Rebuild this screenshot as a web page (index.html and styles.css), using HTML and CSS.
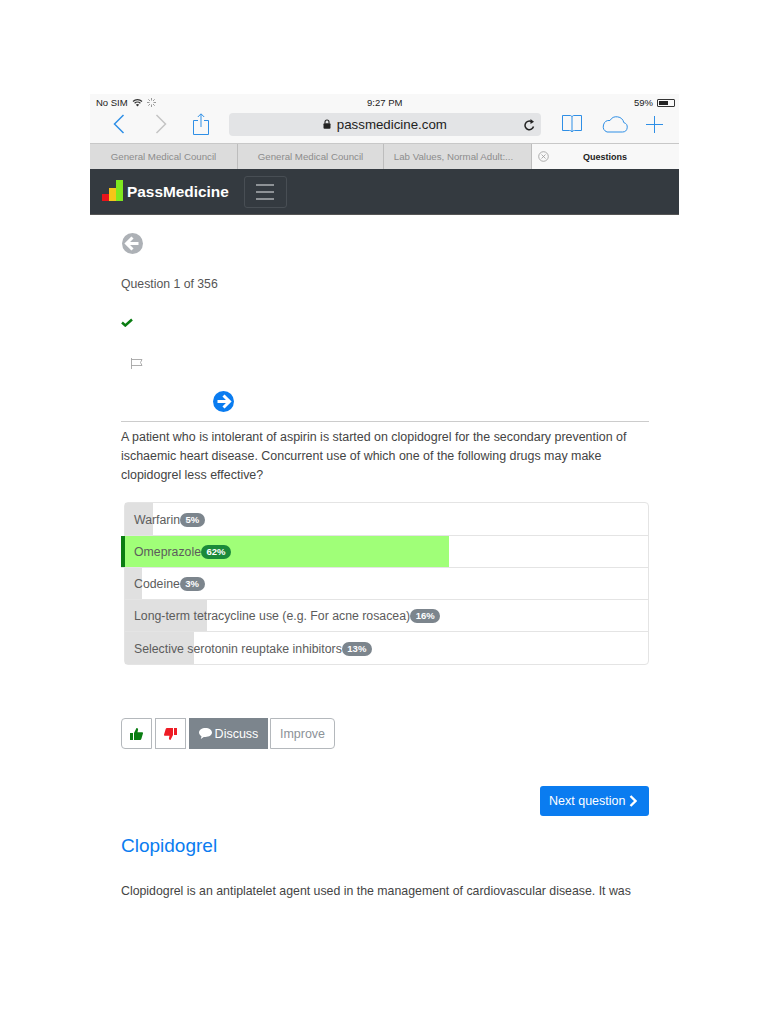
FILE: index.html
```html
<!DOCTYPE html>
<html lang="en">
<head>
    <meta charset="UTF-8">
    <meta name="viewport" content="width=device-width, initial-scale=1.0">
    <title>Questions</title>
    <link rel="stylesheet" href="styles.css">
</head>

<body>
    <div class="screen">
        <div class="statusbar">
            <div class="status-left">
                <span>No SIM</span>
                <svg width="11" height="9" viewBox="0 0 11 9"><path d="M1 3.5a6.5 6.5 0 0 1 9 0M2.6 5.2a4.2 4.2 0 0 1 5.8 0" fill="none" stroke="#333" stroke-width="1.2"/><path d="M5.5 8.5 3.9 6.7a2.3 2.3 0 0 1 3.2 0z" fill="#333"/></svg>
                <svg width="9" height="9" viewBox="0 0 9 9"><path d="M4.5 0v2.5M4.5 6.5V9M0 4.5h2.5M6.5 4.5H9M1.3 1.3 3 3M6 6l1.7 1.7M7.7 1.3 6 3M3 6 1.3 7.7" stroke="#999" stroke-width="1"/></svg>
            </div>
            <span class="status-time">9:27 PM</span>
            <div class="status-right">
                <span>59%</span>
                <span class="battery"><span class="battery-level"></span></span>
            </div>
        </div>

        <div class="toolbar">
            <svg class="tool-back" width="12" height="20" viewBox="0 0 12 20"><path d="M10.5 1 1.5 10l9 9" fill="none" stroke="#2f8fe6" stroke-width="1.5"/></svg>
            <svg class="tool-forward" width="12" height="20" viewBox="0 0 12 20"><path d="M1.5 1l9 9-9 9" fill="none" stroke="#c4c4c4" stroke-width="1.5"/></svg>
            <svg class="tool-share" width="16" height="22" viewBox="0 0 16 22"><path d="M5 7.5H.5v14h15v-14H11M8 14V1M4.8 4 8 .8 11.2 4" fill="none" stroke="#2f8fe6" stroke-width="1"/></svg>
            <div class="urlbar">
                <span class="url">
                    <svg width="8" height="10" viewBox="0 0 8 10"><path d="M2 4.5V3a2 2 0 0 1 4 0v1.5" fill="none" stroke="#222" stroke-width="1.1"/><rect x="0.5" y="4.2" width="7" height="5.5" rx="1" fill="#222"/></svg>
                    passmedicine.com
                </span>
                <svg class="reload" width="11" height="12" viewBox="0 0 11 12"><path d="M9.5 7.5A4.3 4.3 0 1 1 7.2 2.5" fill="none" stroke="#222" stroke-width="1.5"/><path d="M6.5 0l3.5 2.7L6.5 5z" fill="#222"/></svg>
            </div>
            <svg class="tool-book" width="20" height="18" viewBox="0 0 20 18"><path d="M.5.5H8c1 0 2 .5 2 1.5 0-1 1-1.500 2-1.500h7.500v15h-7c-1 0-2 .3-2.500 1.500-.5-1.200-1.500-1.500-2.500-1.500h-7zM10 2v15" fill="none" stroke="#2f8fe6" stroke-width="1"/></svg>
            <svg class="tool-cloud" width="27" height="18" viewBox="0 0 27 18"><path d="M6 17h15.500a4.800 4.800 0 0 0 1.300-9.400A7.500 7.500 0 0 0 9 5.500 6 6 0 0 0 6 17z" fill="none" stroke="#2f8fe6" stroke-width="1"/></svg>
            <svg class="tool-plus" width="17" height="17" viewBox="0 0 17 17"><path d="M8.500 0v17M0 8.500h17" stroke="#2f8fe6" stroke-width="1"/></svg>
        </div>

        <div class="tabs">
            <div class="tab tab-first">General Medical Council</div>
            <div class="tab tab-second">General Medical Council</div>
            <div class="tab tab-third">Lab Values, Normal Adult:...</div>
            <svg class="tab-close" width="11" height="11" viewBox="0 0 11 11"><circle cx="5.5" cy="5.5" r="4.8" fill="none" stroke="#999" stroke-width="0.8"/><path d="M3.5 3.5l4 4M7.5 3.5l-4 4" stroke="#999" stroke-width="0.8"/></svg>
            <div class="tab-active">Questions</div>
        </div>

        <nav class="navbar">
            <svg class="logo" width="21" height="21" viewBox="0 0 21 21">
                <rect x="0" y="14" width="7" height="7" fill="#e8131b"/>
                <rect x="7" y="8" width="7" height="13" fill="#f5c518"/>
                <rect x="14" y="0" width="7" height="21" fill="#7ee81f"/>
            </svg>
            <span class="brand">PassMedicine</span>
            <div class="menu-toggle">
                <span class="menu-line"></span>
                <span class="menu-line"></span>
                <span class="menu-line"></span>
            </div>
        </nav>

        <main class="content">
            <svg class="icon-back" width="21" height="21" viewBox="0 0 21 21">
                <circle cx="10.5" cy="10.5" r="10.5" fill="#adb1b6"/>
                <path d="M10.5 4.500 4.500 10.500l6 6M5 10.500h11.500" fill="none" stroke="#fff" stroke-width="3"/>
            </svg>
            <p class="question-count">Question 1 of 356</p>
            <svg class="icon-check" width="12" height="9" viewBox="0 0 12 9"><path d="M1 4.500 4.300 7.500 11 1.500" fill="none" stroke="#0a7d12" stroke-width="2.5"/></svg>
            <svg class="icon-flag" width="12" height="11" viewBox="0 0 12 11"><path d="M.5 0v11M.5 1.500h10.500L9.500 4.500 11 7.500H.5" fill="none" stroke="#999" stroke-width="0.8"/></svg>
            <svg class="icon-next" width="21" height="21" viewBox="0 0 21 21">
                <circle cx="10.5" cy="10.5" r="10.5" fill="#0a7cf0"/>
                <path d="M10.5 4.500l6 6-6 6M16 10.500H4.500" fill="none" stroke="#fff" stroke-width="3"/>
            </svg>
            <hr class="divider">
            <p class="question-text">A patient who is intolerant of aspirin is started on clopidogrel for the secondary prevention of ischaemic heart disease. Concurrent use of which one of the following drugs may make clopidogrel less effective?</p>

            <ul class="answers">
                <li class="answer">
                    <div class="answer-bar bar-warfarin"></div>
                    <span class="answer-label">Warfarin</span><span class="badge">5%</span>
                </li>
                <li class="answer answer-correct">
                    <div class="answer-bar bar-omeprazole"></div>
                    <span class="answer-label">Omeprazole</span><span class="badge badge-correct">62%</span>
                </li>
                <li class="answer">
                    <div class="answer-bar bar-codeine"></div>
                    <span class="answer-label">Codeine</span><span class="badge">3%</span>
                </li>
                <li class="answer">
                    <div class="answer-bar bar-tetracycline"></div>
                    <span class="answer-label">Long-term tetracycline use (e.g. For acne rosacea)</span><span class="badge">16%</span>
                </li>
                <li class="answer">
                    <div class="answer-bar bar-ssri"></div>
                    <span class="answer-label">Selective serotonin reuptake inhibitors</span><span class="badge">13%</span>
                </li>
            </ul>

            <div class="actions">
                <button class="btn btn-thumb btn-up">
                    <svg width="13" height="12" viewBox="0 0 13 12"><path d="M0 5h3v7H0zM4 5l2.500-5c1.200 0 1.800.8 1.500 2L7.500 4.200H12c1 0 1.200 1 .8 1.800l-1.500 5c-.2.700-.6 1-1.300 1H4z" fill="#0a7d12"/></svg>
                </button>
                <button class="btn btn-thumb btn-down">
                    <svg width="13" height="12" viewBox="0 0 13 12"><path d="M13 7h-3V0h3zM9 7l-2.500 5c-1.200 0-1.800-.8-1.500-2l.5-2.200H1C0 7.800-.2 6.800.2 6l1.500-5C1.900.3 2.300 0 3 0h6z" fill="#ee1c25"/></svg>
                </button>
                <button class="btn btn-discuss">
                    <svg width="13" height="11" viewBox="0 0 13 11"><path d="M6.500 0C2.900 0 0 2 0 4.600c0 1.500 1 2.800 2.500 3.600L1.800 11l3-2.100c.5.100 1.100.1 1.700.1C10.100 9 13 7.100 13 4.600S10.100 0 6.500 0z" fill="#fff"/></svg>
                    Discuss
                </button>
                <button class="btn btn-improve">Improve</button>
            </div>

            <div class="next-row">
                <button class="btn-next">
                    Next question
                    <svg width="8" height="12" viewBox="0 0 8 12"><path d="M1.500 1l5 5-5 5" fill="none" stroke="#fff" stroke-width="2.4"/></svg>
                </button>
            </div>

            <h2 class="topic-title">Clopidogrel</h2>
            <p class="topic-text">Clopidogrel is an antiplatelet agent used in the management of cardiovascular disease. It was</p>
        </main>
    </div>
</body>

</html>
```

FILE: styles.css
```css
* {
    margin: 0;
    padding: 0;
    box-sizing: border-box;
    font-family: 'Liberation Sans', Arial, sans-serif;
}

html, body {
    background: #fff;
    height: 1024px;
    overflow: hidden;
}

body {
    padding: 94px 89px 0 90px;
}

.statusbar {
    display: flex;
    align-items: center;
    justify-content: space-between;
    height: 17px;
    padding: 0 4px 0 6px;
    background: #f8f8f8;
    color: #222;
    font-size: 9.5px;
    position: relative;
}

.status-left, .status-right {
    display: flex;
    align-items: center;
    gap: 4px;
}

.status-time {
    position: absolute;
    left: 277px;
}

.battery {
    display: block;
    width: 18px;
    height: 8px;
    border: 1px solid #333;
    border-radius: 1px;
    padding: 1px;
}

.battery-level {
    display: block;
    width: 9px;
    height: 100%;
    background: #222;
}

.toolbar {
    display: flex;
    align-items: center;
    height: 33px;
    background: #f8f8f8;
    border-bottom: 1px solid #c8c8c8;
    padding: 0 0 6px 23px;
}

.tool-forward {
    margin-left: 30px;
}

.tool-share {
    margin-left: 26px;
}

.urlbar {
    display: flex;
    align-items: center;
    justify-content: center;
    position: relative;
    width: 312px;
    height: 23px;
    margin-left: 20px;
    background: #e3e4e6;
    border-radius: 4px;
    color: #222;
    font-size: 13.3px;
}

.url svg {
    margin-right: 2px;
}

.reload {
    position: absolute;
    right: 6px;
    top: 6px;
}

.tool-book {
    margin-left: 21px;
}

.tool-cloud {
    margin-left: 19px;
}

.tool-plus {
    margin-left: 18px;
}

.tabs {
    display: flex;
    align-items: center;
    height: 25px;
    background: #f8f8f8;
    font-size: 9.7px;
}

.tab {
    display: flex;
    align-items: center;
    justify-content: center;
    height: 100%;
    background: #dcdcdc;
    color: #8c8c8c;
    border-right: 1px solid #bdbdbd;
}

.tab-first {
    width: 148px;
}

.tab-second {
    width: 146px;
}

.tab-third {
    width: 148px;
    padding-right: 8px;
}

.tab-close {
    margin-left: 6px;
}

.tab-active {
    margin-left: 34px;
    color: #222;
    font-size: 9px;
    font-weight: bold;
}

.navbar {
    display: flex;
    align-items: center;
    height: 46px;
    background: #343a40;
    border-bottom: 1px solid #555;
    padding-left: 12px;
}

.logo {
    margin-bottom: 3px;
}

.brand {
    margin-left: 4px;
    color: #fff;
    font-size: 15.4px;
    font-weight: bold;
}

.menu-toggle {
    display: flex;
    flex-direction: column;
    align-items: center;
    justify-content: center;
    gap: 5px;
    width: 43px;
    height: 32px;
    margin-left: 15px;
    border: 1px solid #484e54;
    border-radius: 3px;
}

.menu-line {
    display: block;
    width: 18px;
    height: 2px;
    background: #8e9296;
}

.content {
    display: flex;
    flex-direction: column;
    align-items: flex-start;
    padding: 18px 30px 0 31px;
}

.icon-back {
    margin-left: 1px;
}

.question-count {
    margin-top: 21px;
    font-size: 12.25px;
    line-height: 19px;
    color: #555;
}

.icon-check {
    margin-top: 24px;
}

.icon-flag {
    margin-top: 31px;
    margin-left: 10px;
}

.icon-next {
    margin-top: 22px;
    margin-left: 92px;
}

.divider {
    width: 100%;
    margin-top: 9px;
    border: none;
    border-top: 1px solid #ccc;
}

.question-text {
    margin-top: 6px;
    font-size: 12.45px;
    line-height: 19px;
    color: #444;
}

.answers {
    width: 525px;
    margin-top: 17px;
    margin-left: 3px;
    list-style: none;
    border: 1px solid #e4e4e4;
    border-radius: 4px;
}

.answer {
    display: flex;
    align-items: center;
    position: relative;
    height: 32px;
    padding: 1px 0 0 9px;
    font-size: 12.3px;
    color: #5c5c5c;
    border-bottom: 1px solid #e4e4e4;
}

.answer:first-child {
    height: 33px;
}

.answer:last-child {
    border-bottom: none;
}

.answer-correct {
    margin-left: -4px;
    padding-left: 13px;
}

.answer-bar {
    position: absolute;
    left: 0;
    top: 0;
    bottom: 0;
    background: #e0e0e0;
}

.bar-warfarin {
    width: 28px;
}

.bar-omeprazole {
    width: 328px;
    background: #a0ff78;
    border-left: 4px solid #0a7d12;
}

.bar-codeine {
    width: 17px;
}

.bar-tetracycline {
    width: 82px;
}

.bar-ssri {
    width: 69px;
}

.answer-label, .badge {
    position: relative;
}

.badge {
    padding: 2px 5.5px;
    border-radius: 8px;
    background: #7c858d;
    color: #fff;
    font-size: 9.5px;
    font-weight: bold;
    line-height: 10px;
}

.badge-correct {
    background: #1a8a3a;
}

.actions {
    display: flex;
    align-items: stretch;
    height: 31px;
    margin-top: 53px;
}

.btn {
    display: flex;
    align-items: center;
    justify-content: center;
    background: #fff;
    border: 1px solid #b4b8bc;
    font-size: 12.5px;
    color: #8c9298;
}

.btn-thumb {
    width: 31px;
}

.btn-up {
    border-radius: 4px 0 0 4px;
}

.btn-down {
    margin-left: 3px;
}

.btn-discuss {
    gap: 3px;
    width: 79px;
    margin-left: 3px;
    background: #7c858d;
    border-color: #7c858d;
    color: #fff;
}

.btn-improve {
    width: 65px;
    margin-left: 2px;
    border-radius: 0 4px 4px 0;
}

.next-row {
    display: flex;
    justify-content: flex-end;
    width: 100%;
    margin-top: 37px;
}

.btn-next {
    display: flex;
    align-items: center;
    gap: 4px;
    height: 30px;
    width: 109px;
    padding-left: 9px;
    background: #0a7cf0;
    border: none;
    border-radius: 3px;
    color: #fff;
    font-size: 12.5px;
}

.topic-title {
    margin-top: 19px;
    font-size: 19px;
    font-weight: normal;
    line-height: 22px;
    color: #0a7cf0;
}

.topic-text {
    margin-top: 25px;
    font-size: 12.33px;
    line-height: 19px;
    color: #444;
}
```
